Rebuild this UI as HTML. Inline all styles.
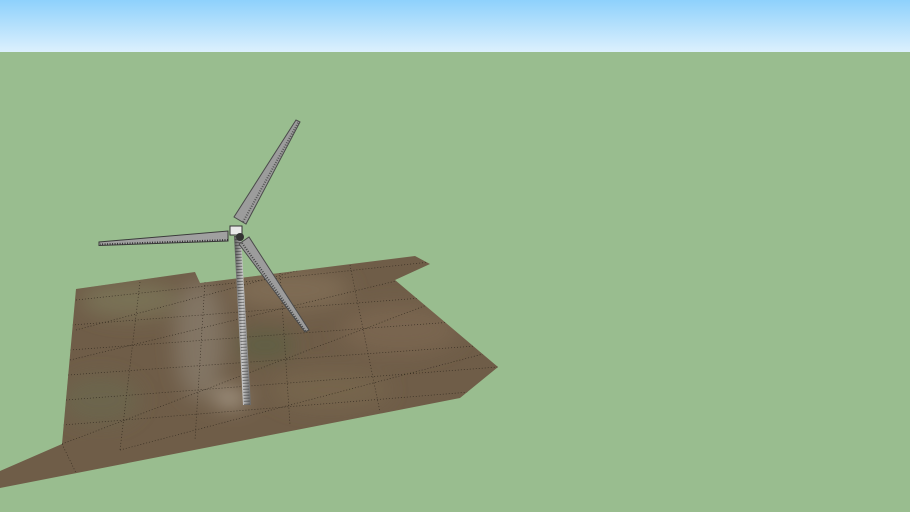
<!DOCTYPE html>
<html><head><meta charset="utf-8"><style>html,body{margin:0;padding:0;width:910px;height:512px;overflow:hidden;background:#99bd8f}</style></head>
<body>
<svg width="910" height="512" viewBox="0 0 910 512" xmlns="http://www.w3.org/2000/svg">
<defs>
<linearGradient id="sky" x1="0" y1="0" x2="0" y2="1">
<stop offset="0" stop-color="#8ed1fc"/><stop offset="1" stop-color="#dcf0fd"/>
</linearGradient>
<clipPath id="tc"><polygon points="76,289 195,272 200,283 415,256 430,264 395,280 498,367 460,398 0,488 0,471 62,444"/></clipPath>
<filter id="bf"><feGaussianBlur stdDeviation="10"/></filter>
<linearGradient id="bl" x1="0" y1="0" x2="1" y2="0">
<stop offset="0" stop-color="#555"/><stop offset="0.5" stop-color="#c8c8c8"/><stop offset="1" stop-color="#666"/>
</linearGradient>
</defs>
<rect width="910" height="52" fill="url(#sky)"/>
<rect y="52" width="910" height="460" fill="#99bd8f"/>
<g clip-path="url(#tc)">
<rect x="0" y="250" width="510" height="250" fill="#6f5d48"/>
<g filter="url(#bf)">
<ellipse cx="130" cy="300" rx="50" ry="18" fill="#7d7a5c" opacity="0.7"/>
<ellipse cx="200" cy="340" rx="25" ry="60" fill="#8f8676" opacity="0.6"/>
<ellipse cx="290" cy="290" rx="60" ry="20" fill="#85725a" opacity="0.7"/>
<ellipse cx="265" cy="345" rx="30" ry="15" fill="#55603f" opacity="0.6"/>
<ellipse cx="400" cy="330" rx="60" ry="25" fill="#7e6a52" opacity="0.7"/>
<ellipse cx="100" cy="400" rx="40" ry="25" fill="#6a6a50" opacity="0.6"/>
<ellipse cx="330" cy="390" rx="60" ry="20" fill="#7c6a50" opacity="0.6"/>
<ellipse cx="230" cy="398" rx="16" ry="7" fill="#cfc6b6" opacity="0.8"/>
</g>
<g stroke="#2e261c" stroke-width="0.7" stroke-dasharray="1,2" fill="none" opacity="0.85">
<line x1="76" y1="300" x2="430" y2="262"/>
<line x1="72" y1="325" x2="460" y2="295"/><line x1="70" y1="350" x2="480" y2="320"/>
<line x1="68" y1="375" x2="490" y2="345"/><line x1="66" y1="400" x2="498" y2="367"/>
<line x1="63" y1="425" x2="470" y2="392"/>
<line x1="140" y1="282" x2="120" y2="450"/><line x1="205" y1="282" x2="195" y2="440"/>
<line x1="280" y1="273" x2="290" y2="425"/><line x1="350" y1="265" x2="380" y2="412"/>
<line x1="62" y1="444" x2="77" y2="475"/>
<line x1="70" y1="360" x2="400" y2="280"/><line x1="62" y1="444" x2="440" y2="300"/>
<line x1="120" y1="450" x2="498" y2="350"/><line x1="76" y1="330" x2="300" y2="270"/>
</g>
</g>
<polygon points="234,236 241,236 251,405 243,405" fill="url(#bl)"/>
<line x1="237.5" y1="236" x2="247" y2="405" stroke="#333" stroke-width="6" stroke-dasharray="1,2" opacity="0.55"/>
<polygon points="234,217 246,224 300,122 296,120" fill="#9c9c9c" stroke="#4a4a4a" stroke-width="1"/>
<polygon points="228,231 228,241 99,245.5 99,242" fill="#a0a0a0" stroke="#3a3a3a" stroke-width="1"/>
<polygon points="239,244 249,237 309,330 305,332" fill="#9c9c9c" stroke="#4a4a4a" stroke-width="1"/>
<line x1="243" y1="222" x2="299" y2="121" stroke="#555" stroke-width="2" stroke-dasharray="1,1.5"/>
<line x1="228" y1="240" x2="100" y2="244.5" stroke="#333" stroke-width="2" stroke-dasharray="1,1.5"/>
<line x1="242" y1="243" x2="306" y2="332" stroke="#444" stroke-width="2" stroke-dasharray="1,1.5"/>
<rect x="230" y="226" width="12" height="9" fill="#e8e8e8" stroke="#333" stroke-width="1"/>
<circle cx="240" cy="237" r="4" fill="#333"/>
</svg>
</body></html>
